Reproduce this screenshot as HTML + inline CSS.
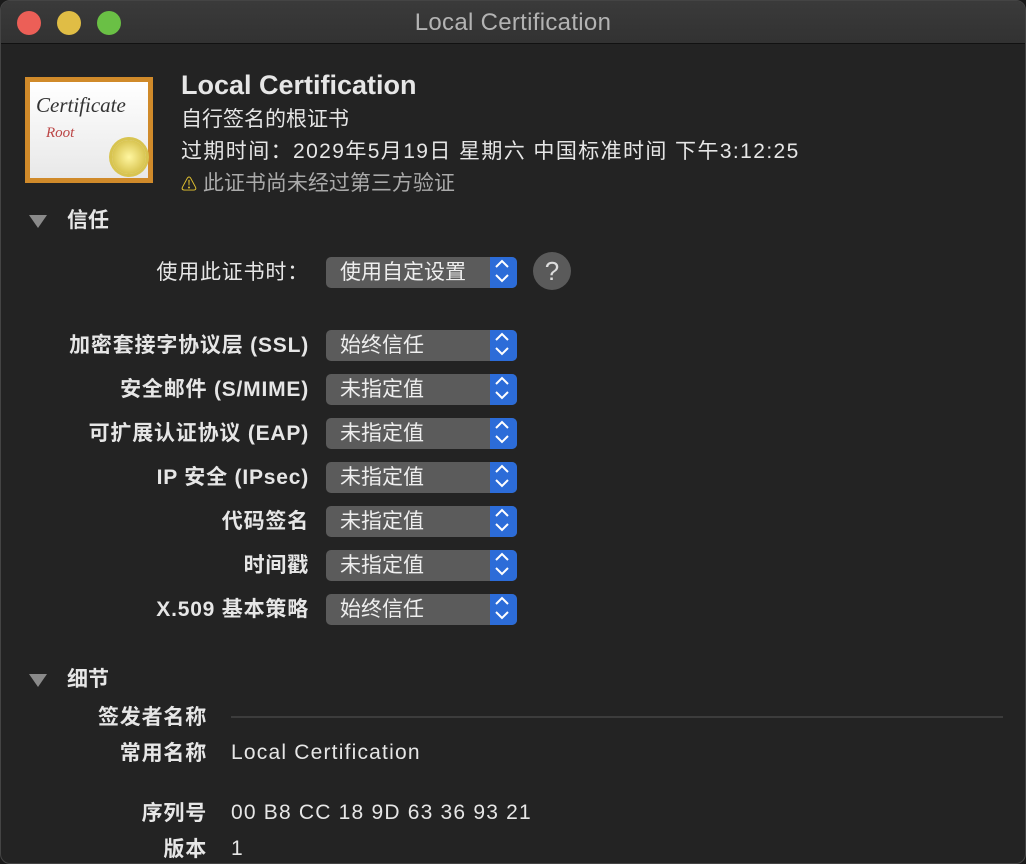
<!DOCTYPE html>
<html><head><meta charset="utf-8"><style>
*{margin:0;padding:0;box-sizing:border-box}
body{width:1026px;height:864px;background:#1a1a1a;overflow:hidden;font-family:"Liberation Sans","Noto Sans CJK SC",sans-serif;color:#e6e6e6}
.win{position:absolute;left:0;top:0;width:1026px;height:864px;background:#232323;border-radius:10px;overflow:hidden;border:1px solid #444}
.tb{position:absolute;left:0;top:0;width:100%;height:43px;background:linear-gradient(#3a3a3a,#323232);border-bottom:1px solid #111}
.tb .t{position:absolute;left:0;right:0;top:0;line-height:44px;text-align:center;font-size:24px;color:#b3b3b3;letter-spacing:0.3px}
.dot{position:absolute;top:10px;width:24px;height:24px;border-radius:50%}
.a{position:absolute;white-space:nowrap;line-height:30px}
.lbl{position:absolute;right:716px;font-size:21px;font-weight:bold;white-space:nowrap;text-align:right;line-height:31px;letter-spacing:0.8px}
.pop{position:absolute;left:325px;width:191px;height:31px;border-radius:5px;background:#5b5b5b;font-size:21px;padding-left:14px;line-height:31px;color:#eee}
.pop .b{position:absolute;right:0;top:0;width:27px;height:31px;background:#2c6cd8;border-radius:0 5px 5px 0}
.tri{position:absolute;width:0;height:0;border-left:9px solid transparent;border-right:9px solid transparent;border-top:13px solid #8a8a8a}
.d{font-size:21px}
.v{letter-spacing:1.2px}
</style></head><body><div class="win">
<div class="tb"><div class="dot" style="left:16px;background:#ec5f57"></div><div class="dot" style="left:56px;background:#e0bd45"></div><div class="dot" style="left:96px;background:#6ac045"></div><div class="t">Local Certification</div></div>
<div class="a" style="left:24px;top:76px;width:128px;height:106px;background:#d08a2a;padding:5px;line-height:normal"><div style="width:100%;height:100%;background:linear-gradient(#fff,#e8e8e8);position:relative;font-family:'Liberation Serif',serif;font-style:italic">
<div class="a" style="left:6px;top:8px;font-size:21px;color:#333">Certificate</div>
<div class="a" style="left:16px;top:36px;font-size:15px;color:#b44">Root</div>
<div class="a" style="left:82px;top:58px;width:34px;height:34px;border-radius:50%;background:radial-gradient(#fff6a0,#c9b030);box-shadow:0 0 0 3px #d8c450"></div></div></div>
<div class="a" style="left:180px;top:69px;font-size:27px;font-weight:bold">Local Certification</div>
<div class="a d" style="left:180px;top:104px">自行签名的根证书</div>
<div class="a d" style="left:180px;top:136px;letter-spacing:1.4px">过期时间：2029年5月19日 星期六 中国标准时间 下午3:12:25</div>
<div class="a d" style="left:180px;top:168px;color:#aaa"><span style="color:#e0c030;font-size:16px">⚠</span> 此证书尚未经过第三方验证</div>
<div class="tri" style="left:28px;top:214px"></div>
<div class="a d" style="left:66px;top:205px;font-weight:bold">信任</div>
<div class="lbl" style="top:256px;font-weight:normal">使用此证书时：</div>
<div class="pop" style="top:256px">使用自定设置<div class="b"></div></div>
<div class="a" style="left:532px;top:251px;width:38px;height:38px;border-radius:50%;background:#5a5a5a;text-align:center;line-height:38px;font-size:26px;color:#ddd">?</div>
<div class="lbl" style="top:329px">加密套接字协议层 (SSL)</div><div class="pop" style="top:329px">始终信任<div class="b"></div></div>
<div class="lbl" style="top:373px">安全邮件 (S/MIME)</div><div class="pop" style="top:373px">未指定值<div class="b"></div></div>
<div class="lbl" style="top:417px">可扩展认证协议 (EAP)</div><div class="pop" style="top:417px">未指定值<div class="b"></div></div>
<div class="lbl" style="top:461px">IP 安全 (IPsec)</div><div class="pop" style="top:461px">未指定值<div class="b"></div></div>
<div class="lbl" style="top:505px">代码签名</div><div class="pop" style="top:505px">未指定值<div class="b"></div></div>
<div class="lbl" style="top:549px">时间戳</div><div class="pop" style="top:549px">未指定值<div class="b"></div></div>
<div class="lbl" style="top:593px">X.509 基本策略</div><div class="pop" style="top:593px">始终信任<div class="b"></div></div>
<div class="tri" style="left:28px;top:673px"></div>
<div class="a d" style="left:66px;top:664px;font-weight:bold">细节</div>
<div class="lbl" style="top:701px;right:818px">签发者名称</div>
<div class="a" style="left:230px;top:715px;width:772px;height:2px;background:#3c3c3c"></div>
<div class="lbl" style="top:737px;right:818px">常用名称</div><div class="a d v" style="left:230px;top:737px">Local Certification</div>
<div class="lbl" style="top:797px;right:818px">序列号</div><div class="a d v" style="left:230px;top:797px">00 B8 CC 18 9D 63 36 93 21</div>
<div class="lbl" style="top:833px;right:818px">版本</div><div class="a d" style="left:230px;top:833px">1</div>
</div>
<svg style="position:absolute;left:0;top:0" width="1026" height="864">
<g fill="none" stroke="#fff" stroke-width="2">
<path d="M496 267l6-6 6 6M496 275l6 6 6-6"/><path d="M496 340l6-6 6 6M496 348l6 6 6-6"/><path d="M496 384l6-6 6 6M496 392l6 6 6-6"/><path d="M496 428l6-6 6 6M496 436l6 6 6-6"/><path d="M496 472l6-6 6 6M496 480l6 6 6-6"/><path d="M496 516l6-6 6 6M496 524l6 6 6-6"/><path d="M496 560l6-6 6 6M496 568l6 6 6-6"/><path d="M496 604l6-6 6 6M496 612l6 6 6-6"/>
</g></svg>
</body></html>
